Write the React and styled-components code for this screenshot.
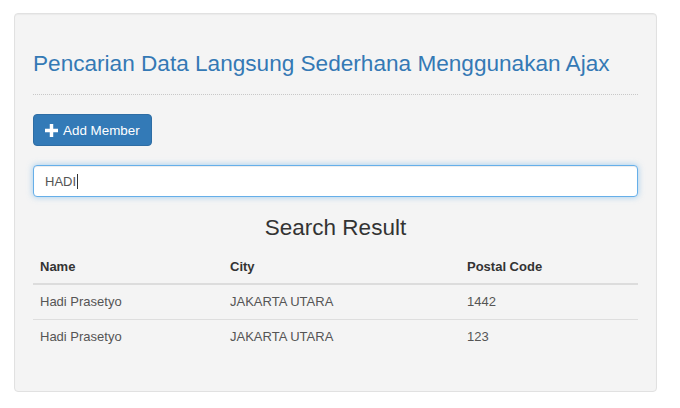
import React from 'react';
import styled, { createGlobalStyle } from 'styled-components';

const GlobalStyle = createGlobalStyle`
    body {
        margin: 0;
        background: #fff;
        font-family: "Liberation Sans", Arial, sans-serif;
        color: #333;
    }
`;

const members = [
    { name: 'Hadi Prasetyo', city: 'JAKARTA UTARA', postal: '1442' },
    { name: 'Hadi Prasetyo', city: 'JAKARTA UTARA', postal: '123' },
];

const App = () => {
    return (
        <>
            <GlobalStyle />
            <Page>
                <Panel>
                    <Header>
                        <Title>Pencarian Data Langsung Sederhana Menggunakan Ajax</Title>
                    </Header>
                    <AddButton type="button">
                        <PlusIcon viewBox="0 0 12 12">
                            <path d="M4.4 0h3.2v4.4H12v3.2H7.6V12H4.4V7.6H0V4.4h4.4z" fill="#fff" />
                        </PlusIcon>
                        Add Member
                    </AddButton>
                    <SearchBox>
                        HADI<Caret />
                    </SearchBox>
                    <ResultTitle>Search Result</ResultTitle>
                    <Table>
                        <colgroup>
                            <col style={{ width: 190 }} />
                            <col style={{ width: 237 }} />
                            <col />
                        </colgroup>
                        <thead>
                            <tr>
                                <Th>Name</Th>
                                <Th>City</Th>
                                <Th>Postal Code</Th>
                            </tr>
                        </thead>
                        <tbody>
                            {members.map((m, i) => (
                                <tr key={i}>
                                    <Td>{m.name}</Td>
                                    <Td>{m.city}</Td>
                                    <Td>{m.postal}</Td>
                                </tr>
                            ))}
                        </tbody>
                    </Table>
                </Panel>
            </Page>
        </>
    );
};

const Page = styled.div`
    padding: 13px 0 0 14px;
`;

const Panel = styled.div`
    width: 605px;
    padding: 37px 18px 37px 18px;
    background: #f4f4f4;
    border: 1px solid #e1e1e1;
    border-radius: 4px;
    box-shadow: inset 0 1px 1px rgba(0, 0, 0, 0.04);
    display: flex;
    flex-direction: column;
    align-items: flex-start;
`;

const Header = styled.div`
    align-self: stretch;
    padding-bottom: 17px;
    border-bottom: 1px dotted #c8c8c8;
    margin-bottom: 19px;
`;

const Title = styled.h1`
    margin: 0;
    font-size: 22.6px;
    line-height: 26px;
    font-weight: 400;
    white-space: nowrap;
    color: #3479b5;
`;

const AddButton = styled.button`
    display: flex;
    align-items: center;
    gap: 5px;
    height: 32px;
    padding: 0 11px 0 11px;
    background: #337ab7;
    border: 1px solid #2e6da4;
    border-radius: 4px;
    color: #fff;
    font-family: "Liberation Sans", Arial, sans-serif;
    font-size: 13.4px;
    margin-bottom: 19px;
`;

const PlusIcon = styled.svg`
    width: 13px;
    height: 13px;
`;

const SearchBox = styled.div`
    align-self: stretch;
    box-sizing: border-box;
    height: 32px;
    display: flex;
    align-items: center;
    padding: 0 11px;
    background: #fff;
    border: 1px solid #66afe9;
    border-radius: 4px;
    box-shadow: inset 0 1px 1px rgba(0, 0, 0, 0.075), 0 0 6px rgba(102, 175, 233, 0.6);
    font-size: 13px;
    color: #555;
    margin-bottom: 18px;
`;

const Caret = styled.span`
    display: inline-block;
    width: 1px;
    height: 15px;
    background: #333;
    margin-left: 1px;
`;

const ResultTitle = styled.h3`
    align-self: stretch;
    margin: 0 0 9px;
    text-align: center;
    font-size: 22.5px;
    line-height: 26px;
    font-weight: 400;
    color: #333;
`;

const Table = styled.table`
    align-self: stretch;
    border-collapse: collapse;
    font-size: 13px;
`;

const Th = styled.th`
    text-align: left;
    padding: 8px 7px;
    line-height: 17px;
    font-weight: 700;
    color: #333;
    border-bottom: 2px solid #dcdcdc;
`;

const Td = styled.td`
    padding: 8px 7px;
    line-height: 18px;
    color: #555;
    border-bottom: 1px solid #dedede;

    tr:last-child & {
        border-bottom: none;
    }
`;

export default App;
